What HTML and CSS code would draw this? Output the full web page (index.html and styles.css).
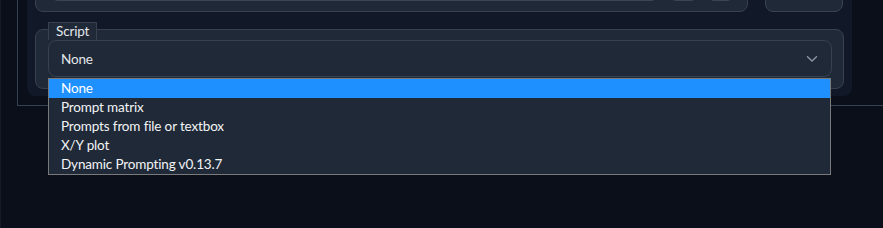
FILE: index.html
```html
<!DOCTYPE html>
<html>
<head>
<meta charset="utf-8">
<link rel="stylesheet" href="styles.css">
</head>
<body>
<div class="page">
  <div class="outer">
    <div class="panel">
      <div class="row">
        <div class="card main">
          <div class="field"></div>
          <div class="tool"></div>
          <div class="tool narrow"></div>
        </div>
        <div class="card side"></div>
      </div>
      <div class="group">
        <span class="label">Script</span>
        <div class="select">
          <span>None</span>
          <svg class="chev" width="12" height="8" viewBox="0 0 12 8"><path d="M1.5 1.8 L6 6 L10.5 1.8" fill="none" stroke="#8b93a1" stroke-width="1.5" stroke-linecap="round" stroke-linejoin="round"/></svg>
        </div>
        <ul class="options">
          <li class="active">None</li>
          <li>Prompt matrix</li>
          <li>Prompts from file or textbox</li>
          <li>X/Y plot</li>
          <li>Dynamic Prompting v0.13.7</li>
        </ul>
      </div>
    </div>
  </div>
</div>
</body>
</html>
```

FILE: styles.css
```css
html, body {
  margin: 0;
  padding: 0;
  background: #0b0f19;
  width: 883px;
  height: 228px;
  overflow: hidden;
  font-family: "Lato", "Liberation Sans", sans-serif;
  font-size: 13.5px;
  letter-spacing: -0.15px;
  color: #e5e7eb;
}

.page {
  display: flow-root;
  border-left: 1px solid #161b26;
  height: 228px;
}

.outer {
  margin: -30px 0 0 16px;
  border-left: 1px solid #374151;
  border-bottom: 1px solid #374151;
  padding: 0 0 9px 9px;
}

.panel {
  width: 825px;
  box-sizing: border-box;
  background: #111827;
  border-radius: 0 0 8px 8px;
  padding: 0 8px 7px 8px;
}

.row {
  display: flex;
  gap: 17px;
  height: 42px;
  margin-bottom: 17px;
}

.card {
  box-sizing: border-box;
  background: #1f2937;
  border: 1px solid #374151;
  border-radius: 8px;
}

.main {
  width: 713px;
  display: flex;
  align-items: flex-end;
  gap: 11px;
  padding: 0 14px 10px 14px;
}

.side {
  width: 78px;
}

.field {
  flex: 1;
  height: 30px;
  background: #283141;
  border: 1px solid #3b4556;
  border-radius: 8px;
}

.tool {
  width: 27px;
  height: 26px;
  background: #283141;
  border: 1px solid #3b4556;
  border-radius: 6px;
  box-sizing: border-box;
}

.tool.narrow {
  width: 25px;
}

.group {
  position: relative;
  box-sizing: border-box;
  background: #1f2937;
  border: 1px solid #374151;
  border-radius: 8px;
  padding: 0 11px 11px 12px;
}

.label {
  display: block;
  width: max-content;
  box-sizing: border-box;
  height: 18px;
  margin-top: -8px;
  padding: 0 7px 0 7px;
  line-height: 17px;
  background: #1f2937;
  border: 1px solid #374151;
  border-bottom: none;
}

.select {
  display: flex;
  align-items: center;
  justify-content: space-between;
  box-sizing: border-box;
  height: 37px;
  padding: 0 13px 0 12px;
  background: #1f2937;
  border: 1px solid #374151;
  border-radius: 8px;
}

.chev {
  display: block;
}

.options {
  position: absolute;
  left: 12px;
  top: 48px;
  width: 783px;
  box-sizing: border-box;
  margin: 0;
  padding: 0;
  list-style: none;
  background: #1f2937;
  border: 1px solid #7a7a7a;
  z-index: 2;
}

.options li {
  height: 19px;
  line-height: 19px;
  padding-left: 12px;
  color: #f3f4f6;
}

.options li.active {
  background: #1e90ff;
  color: #ffffff;
}
```
